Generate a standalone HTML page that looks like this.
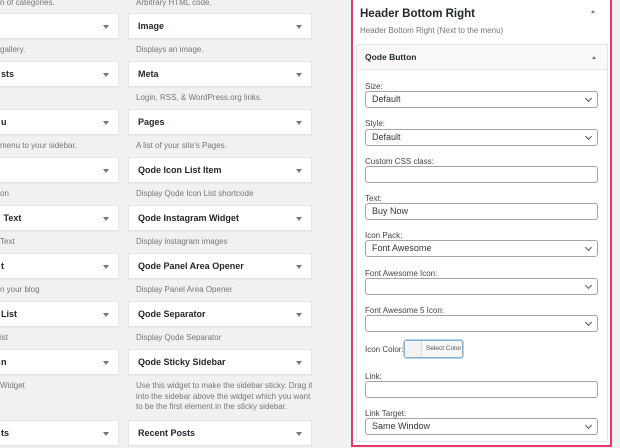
<!DOCTYPE html>
<html><head><style>
*{box-sizing:border-box;margin:0;padding:0}
html,body{width:620px;height:448px;overflow:hidden}
body{background:#f1f1f1;font-family:"Liberation Sans",sans-serif;position:relative;color:#23282d}
.b{position:absolute;height:26px;background:#fff;border:1px solid #e2e4e7;font-size:9px;font-weight:bold;line-height:24px;padding-left:9px;box-shadow:0 1px 1px rgba(0,0,0,.04)}
.b:after{content:"";position:absolute;right:9px;top:11px;border-left:3px solid transparent;border-right:3px solid transparent;border-top:4px solid #72777c}
.d{position:absolute;font-size:8px;color:#72777c;line-height:10px}
.L{left:-10px;width:129px;padding-left:10px}
.R{left:128px;width:184px}
.rp{position:absolute;left:351px;top:-2px;width:261px;height:449px;border:2px solid #e2386c;background:#fff}
.lab{position:absolute;left:365px;font-size:8px;color:#444}
.in{position:absolute;left:365px;width:233px;height:17px;border:1px solid #a0a5aa;border-radius:3px;background:#fff;font-size:9px;line-height:15px;padding-left:6px;color:#32373c}
.s:after{content:"";position:absolute;right:6px;top:4px;width:4px;height:4px;border-right:1px solid #555;border-bottom:1px solid #555;transform:rotate(45deg)}
</style></head><body>
<div class="d" style="left:0;top:-2px">n of categories.</div>
<div class="d" style="left:136px;top:-2px">Arbitrary HTML code.</div>
<div class="b L" style="top:13px"></div><div class="b R" style="top:13px">Image</div>
<div class="d" style="left:0;top:45px">gallery.</div><div class="d" style="left:136px;top:45px">Displays an image.</div>
<div class="b L" style="top:61px">sts</div><div class="b R" style="top:61px">Meta</div>
<div class="d" style="left:136px;top:93px">Login, RSS, &amp; WordPress.org links.</div>
<div class="b L" style="top:109px">u</div><div class="b R" style="top:109px">Pages</div>
<div class="d" style="left:0;top:141px">menu to your sidebar.</div><div class="d" style="left:136px;top:141px">A list of your site's Pages.</div>
<div class="b L" style="top:157px"></div><div class="b R" style="top:157px">Qode Icon List Item</div>
<div class="d" style="left:0;top:189px">on</div><div class="d" style="left:136px;top:189px">Display Qode Icon List shortcode</div>
<div class="b L" style="top:205px">&nbsp;Text</div><div class="b R" style="top:205px">Qode Instagram Widget</div>
<div class="d" style="left:0;top:237px">Text</div><div class="d" style="left:136px;top:237px">Display instagram images</div>
<div class="b L" style="top:253px">t</div><div class="b R" style="top:253px">Qode Panel Area Opener</div>
<div class="d" style="left:0;top:285px">n your blog</div><div class="d" style="left:136px;top:285px">Display Panel Area Opener</div>
<div class="b L" style="top:301px">List</div><div class="b R" style="top:301px">Qode Separator</div>
<div class="d" style="left:0;top:333px">ist</div><div class="d" style="left:136px;top:333px">Display Qode Separator</div>
<div class="b L" style="top:349px">n</div><div class="b R" style="top:349px">Qode Sticky Sidebar</div>
<div class="d" style="left:0;top:381px">Widget</div>
<div class="d" style="left:136px;top:381px;width:180px;line-height:10.5px">Use this widget to make the sidebar sticky. Drag it into the sidebar above the widget which you want to be the first element in the sticky sidebar.</div>
<div class="b L" style="top:420px">ts</div><div class="b R" style="top:420px">Recent Posts</div>

<div class="rp"></div>
<div style="position:absolute;left:360px;top:8px;font-size:11.5px;font-weight:bold;color:#23282d">Header Bottom Right</div>
<div style="position:absolute;left:591px;top:10px;border-left:2.5px solid transparent;border-right:2.5px solid transparent;border-bottom:3px solid #72777c"></div>
<div class="d" style="left:360px;top:26px">Header Bottom Right (Next to the menu)</div>
<div style="position:absolute;left:356px;top:44px;width:252px;height:398px;border:1px solid #e2e4e7;background:#fff"></div>
<div style="position:absolute;left:357px;top:45px;width:250px;height:25px;background:#f9f9f9;border-bottom:1px solid #e2e4e7;font-size:8.5px;font-weight:bold;line-height:25px;padding-left:8px">Qode Button</div>
<div style="position:absolute;left:592px;top:56px;border-left:2.5px solid transparent;border-right:2.5px solid transparent;border-bottom:3px solid #72777c"></div>
<div class="lab" style="top:82px">Size:</div><div class="in s" style="top:91px">Default</div>
<div class="lab" style="top:119px">Style:</div><div class="in s" style="top:129px">Default</div>
<div class="lab" style="top:157px">Custom CSS class:</div><div class="in" style="top:166px"></div>
<div class="lab" style="top:194px">Text:</div><div class="in" style="top:203px">Buy Now</div>
<div class="lab" style="top:231px">Icon Pack:</div><div class="in s" style="top:240px">Font Awesome</div>
<div class="lab" style="top:269px">Font Awesome Icon:</div><div class="in s" style="top:278px"></div>
<div class="lab" style="top:306px">Font Awesome 5 Icon:</div><div class="in s" style="top:315px"></div>
<div class="lab" style="top:345px">Icon Color:</div>
<div style="position:absolute;left:404px;top:340px;width:59px;height:18px;border:1px solid #7fb0d6;border-radius:3px;background:#f7f7f7;box-shadow:0 0 0 1px #b5d3ea"><div style="position:absolute;left:0;top:0;width:17px;height:16px;border-right:1px solid #ddd;background:#f3f3f3"></div><div style="position:absolute;left:21px;top:4px;font-size:6.5px;color:#555">Select Color</div></div>
<div class="lab" style="top:372px">Link:</div><div class="in" style="top:381px"></div>
<div class="lab" style="top:409px">Link Target:</div><div class="in s" style="top:418px">Same Window</div>
</body></html>
